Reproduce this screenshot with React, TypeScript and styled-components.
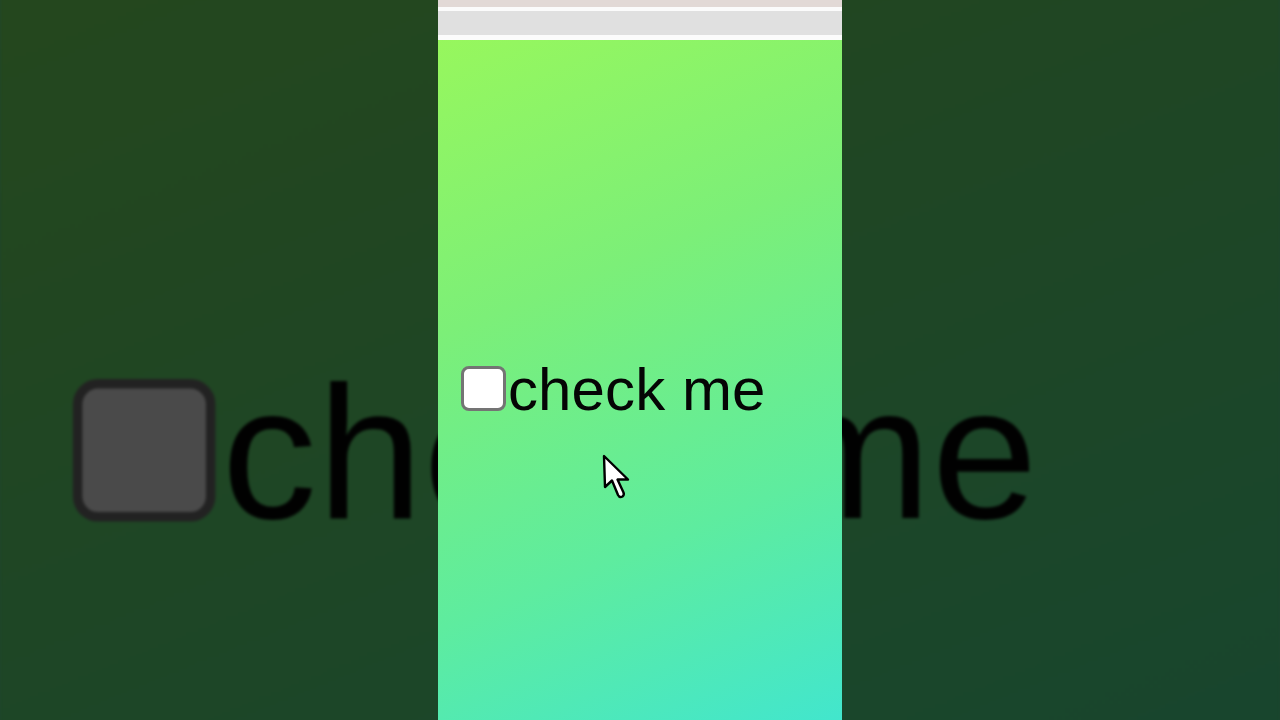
import React from 'react'
import styled, {createGlobalStyle} from 'styled-components'

const GlobalStyle = createGlobalStyle`
  html, body {
    margin: 0;
    padding: 0;
    background: #1f4630;
  }
  body {
    font-family: "Liberation Sans", Arial, sans-serif;
  }
`

const FRAME_WIDTH = 404
const BACKDROP_SCALE = 1280 / FRAME_WIDTH

const Stage = styled.div`
  position: relative;
  width: 1280px;
  height: 720px;
  overflow: hidden;
  display: flex;
  justify-content: center;
  background: #20462e;
`

// blurred, darkened copy of the frame filling the sides
const Backdrop = styled.div`
  position: absolute;
  top: 0;
  left: 50%;
  width: ${FRAME_WIDTH}px;
  height: 720px;
  margin-left: -${FRAME_WIDTH / 2}px;
  transform: scale(${BACKDROP_SCALE});
  transform-origin: center center;
  filter: brightness(0.29) saturate(1.1) blur(0.5px);
  pointer-events: none;
`

const StyledFrame = styled.div`
  position: relative;
  width: ${FRAME_WIDTH}px;
  height: 720px;
  display: flex;
  flex-direction: column;
  flex-shrink: 0;
`

const Strip = styled.div<{ color: string, size: number }>`
  height: ${({ size }) => size}px;
  background: ${({ color }) => color};
`

const Content = styled.div`
  position: relative;
  flex: 1;
  background: linear-gradient(158deg, #97f75d 0%, #7cef78 35%, #5eec9f 70%, #42e6cd 100%);
  padding: 323px 0 0 23px;
`

const Row = styled.label`
  display: flex;
  align-items: center;
  gap: 2px;
`

const Box = styled.span`
  box-sizing: border-box;
  width: 45px;
  height: 45px;
  border: 3px solid #747474;
  border-radius: 8px;
  background: #ffffff;
  flex-shrink: 0;
`

const Label = styled.span`
  font-size: 60px;
  line-height: 46px;
  color: #050505;
  letter-spacing: 0.1px;
  padding-top: 4px;
`

const Cursor = styled.svg`
  position: absolute;
  left: 164px;
  top: 414px;
  width: 30px;
  height: 46px;
`

type IFrameProps = {
    showCursor?: boolean
}

const Frame = (props: IFrameProps) => {
    return (
        <StyledFrame>
            <Strip color="#e2d9d6" size={7}/>
            <Strip color="#fbfbfb" size={4}/>
            <Strip color="#e0e0e0" size={24}/>
            <Strip color="#fbfbfb" size={5}/>
            <Content>
                <Row>
                    <Box/>
                    <Label>check me</Label>
                </Row>
                {props.showCursor &&
                    <Cursor viewBox="0 0 30 46">
                        <path
                            d="M2 2 L3 33 L10 26.5 L16 41 Q17.5 44 20.5 42.5 Q22.5 41 21.5 38.5 L15.5 25.5 L26 25.5 Z"
                            fill="#ffffff"
                            stroke="#000000"
                            strokeWidth="2.4"
                            strokeLinejoin="round"/>
                    </Cursor>}
            </Content>
        </StyledFrame>
    )
}

const App = () => {
    return (
        <React.Fragment>
            <GlobalStyle/>
            <Stage>
                <Backdrop aria-hidden="true">
                    <Frame/>
                </Backdrop>
                <Frame showCursor={true}/>
            </Stage>
        </React.Fragment>
    )
}

export default App
